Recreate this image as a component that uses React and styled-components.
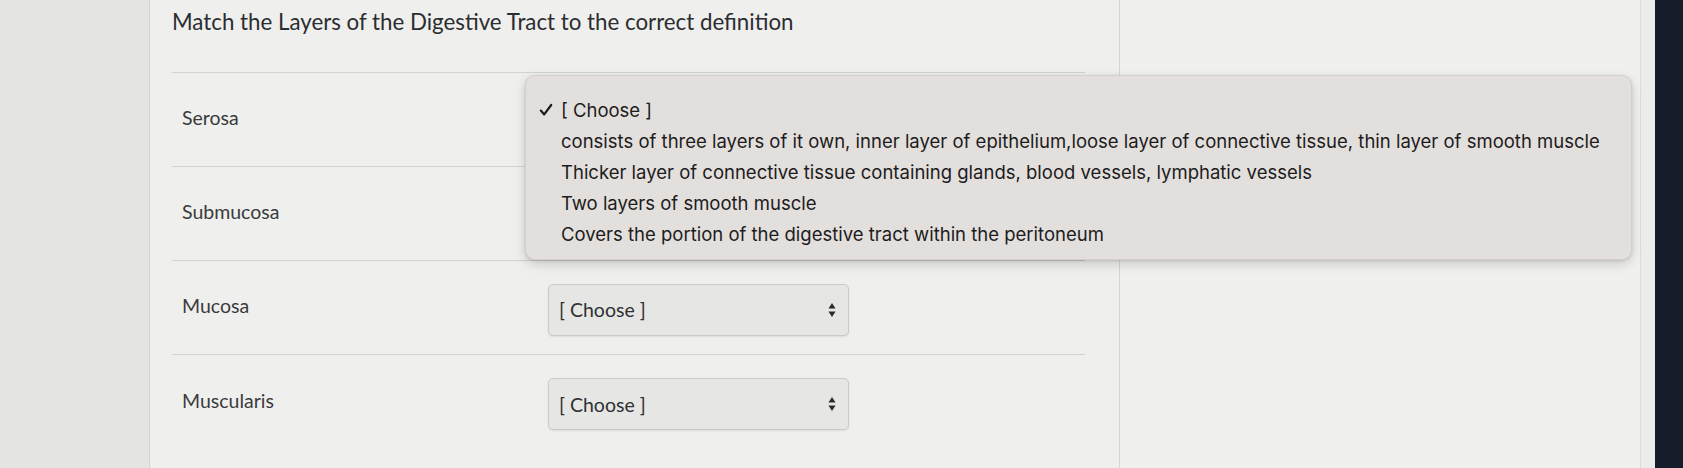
import React from "react";
import styled, { createGlobalStyle } from "styled-components";

const GlobalStyle = createGlobalStyle`
  html, body {
    margin: 0;
    padding: 0;
    background: #eeeeec;
  }
  * {
    box-sizing: border-box;
  }
`;

const layers = ["Serosa", "Submucosa", "Mucosa", "Muscularis"];

const options = [
  "consists of three layers of it own, inner layer of epithelium,loose layer of connective tissue, thin layer of smooth muscle",
  "Thicker layer of connective tissue containing glands, blood vessels, lymphatic vessels",
  "Two layers of smooth muscle",
  "Covers the portion of the digestive tract within the peritoneum",
];

const CheckIcon = () => (
  <svg width="14" height="14" viewBox="0 0 14 14">
    <path
      d="M1.8 7.6 L5.2 11.4 L12.2 2"
      fill="none"
      stroke="#1c1c1c"
      strokeWidth="2.2"
      strokeLinecap="round"
      strokeLinejoin="round"
    />
  </svg>
);

const ArrowsIcon = () => (
  <svg width="8" height="16" viewBox="0 0 8 16">
    <path d="M4 1 L7.5 6.5 H0.5 Z" fill="#2a2a2a" />
    <path d="M4 15 L7.5 9.5 H0.5 Z" fill="#2a2a2a" />
  </svg>
);

const App = () => {
  return (
    <>
      <GlobalStyle />
      <Page>
        <Gutter />
        <Main>
          <Question>
            <Title>Match the Layers of the Digestive Tract to the correct definition</Title>
            <Divider />
            {layers.map((name, i) => (
              <Row key={name} last={i === layers.length - 1}>
                <Label>{name}</Label>
                <SelectCell>
                  {i === 0 ? (
                    <Popup>
                      <Option>
                        <Check>
                          <CheckIcon />
                        </Check>
                        [ Choose ]
                      </Option>
                      {options.map((o) => (
                        <Option key={o}>{o}</Option>
                      ))}
                    </Popup>
                  ) : null}
                  <Select>
                    <span>[ Choose ]</span>
                    <ArrowsIcon />
                  </Select>
                </SelectCell>
              </Row>
            ))}
          </Question>
          <SideColumn />
          <EdgeStrip />
        </Main>
        <Bezel />
      </Page>
    </>
  );
};

const Page = styled.div`
  display: flex;
  width: 1683px;
  height: 468px;
  overflow: hidden;
  background: #efefed;
`;

const Gutter = styled.div`
  width: 150px;
  flex-shrink: 0;
  background: #e5e5e3;
  border-right: 1px solid #d2d2d0;
`;

const Main = styled.div`
  flex: 1;
  display: flex;
  background: #efefed;
`;

const Question = styled.div`
  width: 970px;
  flex-shrink: 0;
  padding: 8px 34px 0 22px;
  border-right: 1px solid #d6d6d4;
`;

const Title = styled.h1`
  margin: 0;
  font-family: Lato, "Open Sans", sans-serif;
  font-weight: 400;
  font-size: 22.3px;
  line-height: 28px;
  color: #2b2d30;
`;

const Divider = styled.div`
  margin-top: 36px;
  height: 1px;
  background: #d2d2d0;
`;

const Row = styled.div`
  display: flex;
  align-items: center;
  height: 94px;
  padding-left: 10px;
  border-bottom: ${(p) => (p.last ? "none" : "1px solid #d2d2d0")};
`;

const Label = styled.div`
  width: 366px;
  flex-shrink: 0;
  font-family: Lato, "Open Sans", sans-serif;
  font-size: 19.5px;
  color: #3a3b3d;
  margin-top: -4px;
`;

const SelectCell = styled.div`
  position: relative;
  margin-top: 4px;
`;

const Select = styled.div`
  width: 301px;
  height: 52px;
  display: flex;
  align-items: center;
  justify-content: space-between;
  padding: 0 12px 0 10px;
  background: #e6e6e4;
  border: 1px solid #cacac8;
  border-radius: 5px;
  box-shadow: 0 1px 2px rgba(0, 0, 0, 0.08);
  font-family: Lato, "Open Sans", sans-serif;
  font-size: 19.5px;
  color: #2f3133;
`;

const Popup = styled.div`
  position: absolute;
  z-index: 5;
  top: -21px;
  left: -23px;
  width: 1107px;
  padding: 19px 0 9px;
  background: #e3dfdc;
  border: 1px solid #d3cfcc;
  border-radius: 10px;
  box-shadow: 0 4px 12px rgba(0, 0, 0, 0.16), 0 1px 3px rgba(0, 0, 0, 0.1);
`;

const Option = styled.div`
  position: relative;
  height: 31px;
  display: flex;
  align-items: center;
  padding-left: 35px;
  font-family: Inter, "Open Sans", sans-serif;
  font-size: 18.5px;
  font-weight: 400;
  color: #1c1c1c;
  white-space: nowrap;
`;

const Check = styled.span`
  position: absolute;
  left: 13px;
  top: 8px;
  display: flex;
`;

const SideColumn = styled.div`
  flex: 1;
  background: #f0f0ee;
`;

const EdgeStrip = styled.div`
  width: 15px;
  flex-shrink: 0;
  background: #ececea;
  border-left: 1px solid #dcdcda;
`;

const Bezel = styled.div`
  width: 28px;
  flex-shrink: 0;
  background: #161c2a;
`;

export default App;
